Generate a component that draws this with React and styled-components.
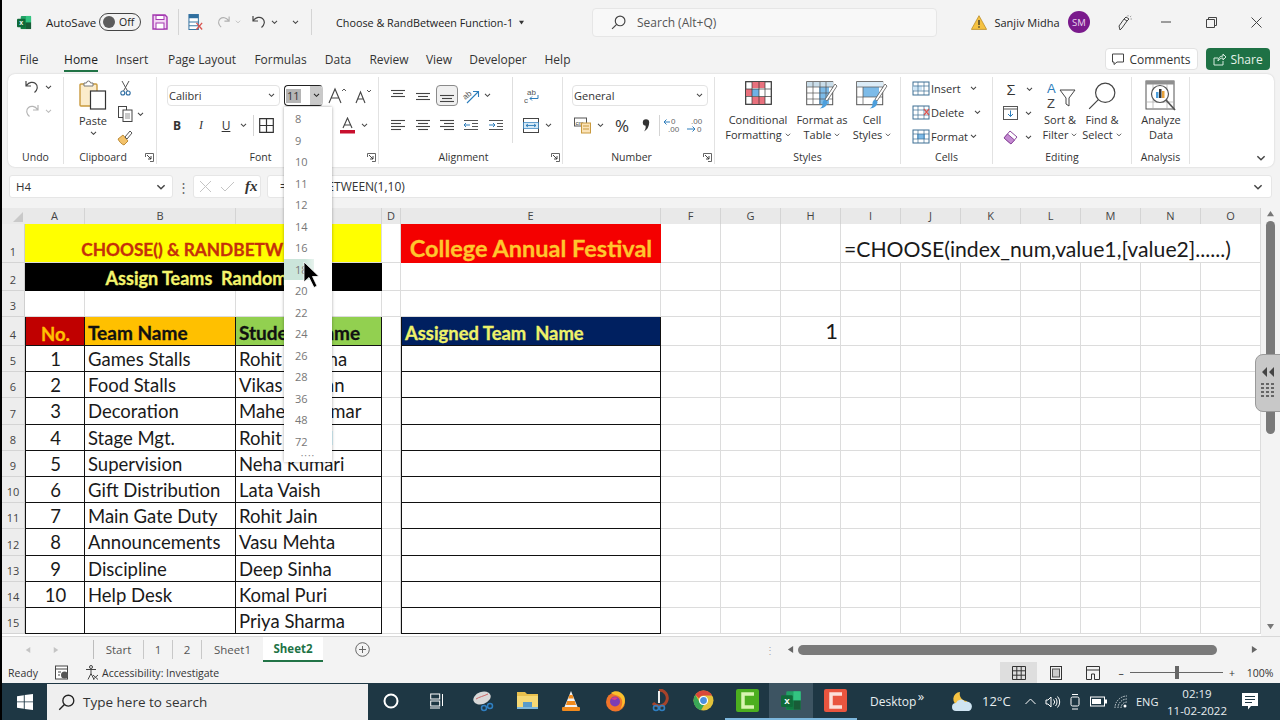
import React from 'react';
import styled, { createGlobalStyle } from 'styled-components';

const GlobalStyle = createGlobalStyle`
  html, body { margin: 0; padding: 0; background: #f3f3f3; }
  body { font-family: "Open Sans", "Noto Sans", sans-serif; color: #333; white-space: nowrap; }
  svg { display: block; }
`;

const Page = styled.div`
  position: relative;
  width: 1278px;
  height: 720px;
  border-left: 2px solid #000;
  overflow: hidden;
  display: flex;
  flex-direction: column;
  background: #f3f3f3;
  font-size: 11.5px;
`;

const Tool = styled.span`
  flex: none;
  width: ${p => p.$w || 16}px;
  margin-left: ${p => p.$ml || 0}px;
  display: inline-flex;
  align-items: center;
  justify-content: center;
  color: ${p => p.$color || 'inherit'};
  font-weight: ${p => p.$bold ? 700 : 400};
  font-size: ${p => p.$size ? p.$size + 'px' : 'inherit'};
`;

const VSep = styled.span`
  flex: none;
  width: 1px;
  height: ${p => p.$h || 22}px;
  margin-left: ${p => p.$ml || 0}px;
  background: #d4d4d4;
`;

/* title bar */
const TitleBar = styled.div`
  height: 44px;
  flex: none;
  display: flex;
  align-items: center;
  padding-left: 15px;
  font-size: 11.5px;
  color: #222;
`;

const Toggle = styled.span`
  width: 42px;
  height: 18px;
  box-sizing: border-box;
  border: 1px solid #444;
  border-radius: 10px;
  display: flex;
  align-items: center;
  gap: 4px;
  padding-left: 3px;
  font-size: 10.5px;
  &::before {
    content: '';
    width: 12px;
    height: 12px;
    border-radius: 50%;
    background: #5c5c5c;
  }
`;

const DocTitle = styled.span`
  width: 256px;
  margin-left: 24px;
  flex: none;
  display: flex;
  align-items: center;
  gap: 6px;
  font-size: 10.8px;
`;

const SearchBox = styled.div`
  width: 345px;
  height: 29px;
  flex: none;
  background: #f8f8f8;
  border: 1px solid #e6e6e6;
  box-sizing: border-box;
  border-radius: 4px;
  display: flex;
  align-items: center;
  padding-left: 18px;
  gap: 11px;
  color: #555;
  font-size: 12px;
`;

const Avatar = styled.span`
  width: 22px;
  height: 22px;
  border-radius: 50%;
  background: #7a1a8c;
  color: #e8d4ec;
  font-size: 9.5px;
  display: flex;
  align-items: center;
  justify-content: center;
  margin-left: 9px;
`;

/* tabs */
const TabRow = styled.div`
  height: 30px;
  flex: none;
  display: flex;
  align-items: flex-start;
  padding-left: 18px;
  box-sizing: border-box;
`;

const MenuTab = styled.span`
  flex: none;
  width: ${p => p.$w}px;
  margin-right: ${p => p.$mr}px;
  height: 24px;
  margin-top: 4px;
  display: flex;
  justify-content: center;
  align-items: center;
  font-size: 12px;
  color: ${p => p.$active ? '#1c1c1c' : '#333'};
  border-bottom: ${p => p.$active ? '2px solid #217346' : '2px solid transparent'};
  box-sizing: border-box;
`;

const CommentsBtn = styled.span`
  margin-left: auto;
  margin-top: 4px;
  width: 93px;
  height: 22px;
  background: #fff;
  border: 1px solid #e2e2e2;
  border-radius: 4px;
  box-sizing: border-box;
  display: flex;
  align-items: center;
  justify-content: center;
  gap: 5px;
  font-size: 12px;
`;

const ShareBtn = styled.span`
  margin: 4px 10px 0 8px;
  width: 64px;
  height: 22px;
  background: #1e7145;
  border-radius: 4px;
  color: #e6f2ea;
  display: flex;
  align-items: center;
  justify-content: center;
  gap: 4px;
  font-size: 12px;
`;

/* ribbon */
const Ribbon = styled.div`
  height: 93px;
  flex: none;
  margin: 0 6px;
  background: #fff;
  border-radius: 7px;
  box-shadow: 0 0 2px rgba(0, 0, 0, 0.18);
  display: flex;
  box-sizing: border-box;
  padding-top: 3px;
`;

const Group = styled.div`
  flex: none;
  width: ${p => p.$w}px;
  height: 87px;
  display: flex;
  flex-direction: column;
  border-right: 1px solid #e2e2e2;
  box-sizing: border-box;
`;

const GroupBody = styled.div`
  flex: 1;
  display: flex;
  padding-left: ${p => p.$pl || 0}px;
  min-height: 0;
`;

const GroupLabel = styled.div`
  position: relative;
  height: 14px;
  line-height: 14px;
  text-align: center;
  font-size: 10.5px;
  color: #333;
  padding-right: ${p => p.$launcher ? 14 : 0}px;
`;

const LauncherBox = styled.span`
  position: absolute;
  right: 2px;
  top: 3px;
`;

const Stack = styled.div`
  display: flex;
  flex-direction: column;
  gap: ${p => p.$gap || 0}px;
  padding-top: ${p => p.$pt || 0}px;
  width: ${p => p.$w ? p.$w + 'px' : 'auto'};
  flex: none;
`;

const ToolRow = styled.div`
  display: flex;
  align-items: center;
  height: ${p => p.$h || 21}px;
  width: ${p => p.$w ? p.$w + 'px' : 'auto'};
`;

const Combo = styled.div`
  flex: none;
  width: ${p => p.$w}px;
  height: 21px;
  box-sizing: border-box;
  border: 1px solid #e3e3e3;
  border-radius: 4px;
  background: #fff;
  display: flex;
  align-items: center;
  justify-content: space-between;
  padding: 0 4px 0 1px;
  font-size: 11px;
  color: #333;
`;

const SizeCombo = styled.div`
  flex: none;
  width: 39px;
  height: 21px;
  margin-left: 4px;
  box-sizing: border-box;
  border: 1.5px solid #222;
  border-right-color: #c8c8c8;
  border-top-color: #222;
  border-radius: 4px;
  display: flex;
  align-items: center;
  overflow: hidden;
  font-size: 11px;
`;

const SizeValue = styled.span`
  margin-left: 1px;
  background: #b5b5b5;
  padding: 0 1px;
  line-height: 14px;
`;

const SizeCaret = styled.span`
  margin-left: auto;
  width: 12px;
  align-self: stretch;
  background: #c9c9c9;
  display: flex;
  align-items: center;
  justify-content: center;
`;

const BoxedTool = styled(Tool)`
  height: 21px;
  border: 1px solid #8a8a8a;
  border-radius: 4px;
  background: #f0f0f0;
  box-sizing: border-box;
`;

const AlignCol = styled(Stack)`
  width: 126px;
  height: 58px;
  border-right: 1px solid #dedede;
  box-sizing: content-box;
`;

const BigButton = styled.div`
  flex: none;
  width: ${p => p.$w}px;
  display: flex;
  flex-direction: column;
  align-items: center;
  padding-top: ${p => p.$pt ?? 4}px;
  font-size: 11px;
  line-height: 15px;
  color: #333;
`;

const BigIcon = styled.div`
  height: 31px;
  display: flex;
  align-items: flex-start;
  justify-content: center;
`;

const Line = styled.span`
  display: flex;
  align-items: center;
  gap: 3px;
  white-space: nowrap;
`;

const CellRow = styled.div`
  width: ${p => p.$w}px;
  height: 16px;
  display: flex;
  align-items: center;
  font-size: 11px;
  gap: 1px;
  & > :last-child { margin-left: auto; }
`;

const RibbonEnd = styled.div`
  flex: 1;
  display: flex;
  align-items: flex-end;
  justify-content: flex-end;
  padding: 0 8px 6px 0;
`;

/* formula bar */
const FormulaBar = styled.div`
  height: 23px;
  flex: none;
  margin-top: 8px;
  display: flex;
  align-items: stretch;
  padding-left: 7px;
`;

const NameBox = styled.div`
  width: 164px;
  flex: none;
  background: #fff;
  border: 1px solid #e6e6e6;
  border-radius: 3px;
  box-sizing: border-box;
  display: flex;
  align-items: center;
  justify-content: space-between;
  padding: 0 6px;
  font-size: 11.5px;
`;

const FxBox = styled.div`
  width: 68px;
  flex: none;
  margin-left: 7px;
  background: #fff;
  border: 1px solid #e6e6e6;
  border-radius: 3px;
  box-sizing: border-box;
  display: flex;
  align-items: center;
  padding-left: 5px;
`;

const FxText = styled.span`
  font-family: "Liberation Serif", serif;
  font-style: italic;
  font-weight: 700;
  font-size: 15px;
  margin-left: 10px;
`;

const FormulaInput = styled.div`
  width: 1005px;
  flex: none;
  margin-left: 6px;
  background: #fff;
  border: 1px solid #e6e6e6;
  border-radius: 3px;
  box-sizing: border-box;
  display: flex;
  align-items: center;
  justify-content: space-between;
  padding: 0 8px 0 12px;
  font-size: 12px;
`;

/* sheet */
const SheetArea = styled.div`
  height: 428px;
  flex: none;
  margin-top: 10px;
  display: flex;
`;

const GridClip = styled.div`
  width: 1259px;
  flex: none;
  overflow: hidden;
  background: #fff;
`;

const SheetGrid = styled.div`
  display: grid;
  grid-template-columns: 23px 60px 151px 146px 19px 260px repeat(10, 60px);
  grid-template-rows: 16px 39px 28px 26px 29px repeat(11, 26.2px);
  font-family: "Lato", "Liberation Sans", sans-serif;
`;

const Corner = styled.div`
  background: #e9e9e9;
  display: flex;
  align-items: flex-end;
  justify-content: flex-end;
  padding: 0 2px 2px 0;
`;

const ColHead = styled.div`
  background: #e9e9e9;
  border-right: 1px solid #d4d4d4;
  font-family: "Open Sans", sans-serif;
  font-size: 11px;
  color: #444;
  text-align: center;
  line-height: 15px;
`;

const RowHead = styled.div`
  background: #ededed;
  border-bottom: 1px solid #d4d4d4;
  border-right: 1px solid #cfcfcf;
  font-family: "Open Sans", sans-serif;
  font-size: 11px;
  color: #444;
  display: flex;
  align-items: flex-end;
  justify-content: center;
  padding-bottom: 3px;
  box-sizing: border-box;
`;

const Cell = styled.div`
  grid-column: span ${p => p.$span || 1};
  box-sizing: border-box;
  background: ${p => p.$bg || '#fff'};
  color: ${p => p.$color || '#1a1a1a'};
  font-size: ${p => p.$size || 18.5}px;
  font-weight: ${p => p.$bold ? 700 : 400};
  -webkit-text-stroke: ${p => p.$bold ? '0.3px' : '0'};
  border-right: 1px solid ${p => p.$line || '#dcdcdc'};
  border-bottom: 1px solid ${p => p.$line || '#dcdcdc'};
  border-left: ${p => p.$left ? '1px solid #111' : 'none'};
  display: flex;
  align-items: flex-end;
  justify-content: ${p => p.$align || 'flex-start'};
  padding: 0 ${p => p.$pr ?? 2}px ${p => p.$pb ?? 1}px 3px;
  white-space: pre;
  line-height: 1.2;
  overflow: hidden;
`;

const VScroll = styled.div`
  width: 19px;
  flex: none;
  display: flex;
  flex-direction: column;
  align-items: center;
  padding: 2px 0 0 0;
  box-sizing: border-box;
`;

const VThumb = styled.div`
  width: 9px;
  height: 213px;
  margin-top: 4px;
  border-radius: 5px;
  background: #7a7a7a;
`;

const VSpacer = styled.div`
  flex: ${p => p.$h ? 'none' : 1};
  height: ${p => p.$h ? p.$h + 'px' : 'auto'};
`;

const SheetHandle = styled.div`
  position: absolute;
  left: 1253px;
  top: 354px;
  width: 30px;
  height: 58px;
  box-sizing: border-box;
  background: #c8c8c8;
  border: 1px solid #9a9a9a;
  border-radius: 8px 0 0 8px;
  display: flex;
  flex-direction: column;
  align-items: flex-start;
  gap: 6px;
  padding: 12px 0 0 5px;
`;

const DotGrid = styled.div`
  display: grid;
  grid-template-columns: repeat(3, 3px);
  gap: 2px 2px;
  & > i { width: 3px; height: 2px; background: #666; display: block; }
`;

/* font size menu */
const SizeMenu = styled.div`
  position: absolute;
  left: 282px;
  top: 107px;
  width: 48px;
  height: 355px;
  background: #fff;
  box-shadow: 0 0 3px rgba(0, 0, 0, 0.35);
  padding-top: 1px;
  box-sizing: border-box;
  overflow: hidden;
`;

const SizeItem = styled.div`
  height: 21.5px;
  line-height: 21.5px;
  padding-left: 11px;
  width: 19px;
  font-size: 11px;
  color: #777;
  background: ${p => p.$hover ? 'linear-gradient(90deg, #cbe5da 70%, #e8f3ee)' : 'transparent'};
`;

const MoreDots = styled.div`
  text-align: center;
  line-height: 8px;
  font-size: 10px;
  letter-spacing: 1px;
  color: #888;
  margin-top: -1px;
`;

const CursorWrap = styled.div`
  position: absolute;
  left: 299px;
  top: 260px;
`;

/* sheet tabs */
const TabStrip = styled.div`
  height: 26px;
  flex: none;
  display: flex;
  align-items: center;
  font-size: 11.5px;
  color: #555;
  background: #f3f3f3;
  border-top: 1px solid #d8d8d8;
  box-sizing: border-box;
`;

const NavArrows = styled.div`
  width: 92px;
  flex: none;
  display: flex;
  padding-left: 23px;
  gap: 22px;
  box-sizing: border-box;
  border-right: 1px solid #bdbdbd;
  height: 19px;
  align-items: center;
`;

const SheetTab = styled.span`
  flex: none;
  width: ${p => p.$w}px;
  box-sizing: border-box;
  height: ${p => p.$active ? 25 : 19}px;
  align-self: ${p => p.$active ? 'flex-start' : 'center'};
  display: flex;
  align-items: center;
  justify-content: center;
  border-right: ${p => p.$sep ? '1px solid #c8c8c8' : 'none'};
  background: ${p => p.$active ? '#fff' : 'transparent'};
  color: ${p => p.$active ? '#217346' : '#555'};
  font-weight: ${p => p.$active ? 700 : 400};
  border-bottom: ${p => p.$active ? '2px solid #217346' : 'none'};
`;

const HThumb = styled.div`
  width: 419px;
  height: 10px;
  flex: none;
  background: #7a7a7a;
  border-radius: 5px;
  margin-left: 4px;
`;

/* status bar */
const StatusBar = styled.div`
  height: 21px;
  flex: none;
  display: flex;
  align-items: center;
  font-size: 10.5px;
  color: #333;
  padding-left: 6px;
`;

const ViewBtn = styled.span`
  flex: none;
  width: ${p => p.$w}px;
  align-self: stretch;
  margin-left: ${p => p.$auto ? 'auto' : '0'};
  display: flex;
  align-items: center;
  justify-content: center;
  background: ${p => p.$active ? '#dedede' : 'transparent'};
`;

const ZoomTrack = styled.span`
  position: relative;
  flex: none;
  width: 93px;
  height: 1px;
  background: #666;
  margin-left: 4px;
`;

const ZoomThumb = styled.span`
  position: absolute;
  left: 45px;
  top: -6px;
  width: 4px;
  height: 13px;
  background: #666;
`;

/* task bar */
const TaskBar = styled.div`
  height: 37px;
  flex: none;
  display: flex;
  align-items: center;
  background: #1e3744;
  color: #e8eef0;
`;

const TaskSearch = styled.div`
  width: 321px;
  height: 36px;
  align-self: flex-end;
  flex: none;
  background: #efefef;
  color: #333;
  display: flex;
  align-items: center;
  padding-left: 11px;
  gap: 8px;
  font-size: 13.5px;
  box-sizing: border-box;
`;

const TaskIcon = styled.span`
  flex: none;
  width: ${p => p.$w || 44}px;
  height: 37px;
  display: flex;
  align-items: center;
  justify-content: center;
  box-sizing: border-box;
  background: ${p => p.$active ? '#3d5462' : 'transparent'};
  border-bottom: ${p => p.$running ? '2px solid #7db7dd' : '2px solid transparent'};
`;

const TrayText = styled.span`
  flex: none;
  width: ${p => p.$w}px;
  margin-left: ${p => p.$ml || 0}px;
  font-size: ${p => p.$size || 12}px;
  text-align: ${p => p.$center ? 'center' : 'left'};
  line-height: 17px;
`;

/* icons */
const Chev = ({ c = '#444', s = 8 }) => (
  <svg width={s} height={s * 0.6} viewBox="0 0 8 5"><path d="M1 1l3 3 3-3" fill="none" stroke={c} strokeWidth="1.2" /></svg>
);

const Undo = ({ c = '#444', flip }) => (
  <svg width="16" height="16" viewBox="0 0 16 16" style={flip ? { transform: 'scaleX(-1)' } : undefined}>
    <path d="M2 2v5h5M2.5 6.5C5 3 9 2.5 11.5 4.5c3 2.5 2 6.5-1 9" fill="none" stroke={c} strokeWidth="1.2" />
  </svg>
);

const ExcelLogo = ({ s = 15 }) => (
  <svg width={s} height={s} viewBox="0 0 16 16">
    <rect x="4" y="1" width="11" height="14" rx="1" fill="#21a366" />
    <rect x="9.5" y="1" width="5.5" height="7" fill="#33c481" />
    <rect x="4" y="8" width="5.5" height="7" fill="#107c41" />
    <rect x="9.5" y="8" width="5.5" height="7" fill="#185c37" />
    <rect x="0" y="4" width="9" height="9" rx="1" fill="#0f6b3a" />
    <text x="4.5" y="11" fontSize="7.5" fontWeight="700" textAnchor="middle" fill="#fff" fontFamily="Liberation Sans">x</text>
  </svg>
);

const SaveIcon = () => (
  <svg width="16" height="16" viewBox="0 0 16 16">
    <path d="M1 1h12l2 2v12H1z" fill="#f3d6f5" stroke="#a438b0" strokeWidth="1.4" />
    <rect x="4" y="1.5" width="8" height="4" fill="#fff" stroke="#a438b0" />
    <rect x="4" y="9" width="8" height="6" fill="#fff" stroke="#a438b0" />
  </svg>
);

const SheetX = () => (
  <svg width="17" height="18" viewBox="0 0 17 18">
    <rect x="1" y="1" width="10" height="16" fill="#fff" stroke="#2f6f9f" />
    <rect x="1" y="1" width="10" height="4" fill="#2f6f9f" />
    <path d="M1 9h10M1 13h10" stroke="#2f6f9f" />
    <path d="M9 10l6 7M15 10l-6 7" stroke="#d9534f" strokeWidth="1.4" />
  </svg>
);

const Warn = () => (
  <svg width="16" height="15" viewBox="0 0 16 15">
    <path d="M8 .7L15.6 14.4H.4z" fill="#f5c242" stroke="#b58215" strokeWidth=".7" />
    <path d="M8 5v5M8 11.2v1.5" stroke="#222" strokeWidth="1.2" />
  </svg>
);

const Pen = () => (
  <svg width="15" height="17" viewBox="0 0 15 17">
    <path d="M3 16l-1-4 5-7 3 2-5 7zM7 5l2-2 3 2-2 2" fill="none" stroke="#444" strokeWidth="1" />
    <path d="M11 1v1.5M13 3l1.2-1M13.5 5H15" stroke="#888" strokeWidth=".8" />
  </svg>
);

const Lens = ({ s = 14, c = '#444', w = 1.1 }) => (
  <svg width={s} height={s} viewBox="0 0 14 14">
    <circle cx="8.5" cy="5.5" r="4.5" fill="none" stroke={c} strokeWidth={w} />
    <path d="M5.3 8.7L1 13" stroke={c} strokeWidth={w} />
  </svg>
);

const PasteIcon = () => (
  <svg width="28" height="30" viewBox="0 0 28 30">
    <rect x="1" y="4" width="17" height="22" rx="1" fill="#fbeccb" stroke="#c99a3e" strokeWidth="1.4" />
    <path d="M5 6V3h2.5a2 2 0 0 1 4 0H14v3z" fill="#fff" stroke="#777" />
    <rect x="11.5" y="11" width="15" height="18" fill="#fff" stroke="#333" strokeWidth="1.2" />
  </svg>
);

const CutIcon = () => (
  <svg width="11" height="15" viewBox="0 0 11 15">
    <path d="M2 0l5.5 10M9 0L3.5 10" stroke="#555" fill="none" strokeWidth="1" />
    <circle cx="2.8" cy="12" r="2" fill="none" stroke="#2d6da3" strokeWidth="1.1" />
    <circle cx="8.2" cy="12" r="2" fill="none" stroke="#2d6da3" strokeWidth="1.1" />
  </svg>
);

const CopyIcon = () => (
  <svg width="15" height="16" viewBox="0 0 15 16">
    <rect x=".5" y=".5" width="8" height="11" fill="#fff" stroke="#444" />
    <rect x="5" y="4" width="9" height="11.5" fill="#fff" stroke="#444" />
    <path d="M7 8h5M7 10h5M7 12h5" stroke="#777" strokeWidth=".8" />
  </svg>
);

const BrushIcon = () => (
  <svg width="16" height="17" viewBox="0 0 16 17">
    <path d="M1 10l5-4 5 6-4 4c-2-.5-5-3.5-6-6z" fill="#f3c26a" stroke="#b07a20" strokeWidth=".8" />
    <path d="M8 8l5-6 2 2-5 6z" fill="#fff" stroke="#444" strokeWidth=".9" />
  </svg>
);

const BoldA = ({ s = 16, up }) => (
  <svg width="20" height="17" viewBox="0 0 20 17">
    <path d={s > 14 ? 'M1 16L7 2l6 14M3.5 11h7' : 'M3 16l4.5-11L12 16M5 12h5'} fill="none" stroke="#444" strokeWidth="1.1" />
    <path d={up ? 'M14 4l2-2 2 2' : 'M14 3l2 2 2-2'} fill="none" stroke="#444" strokeWidth=".9" />
  </svg>
);

const BorderGrid = () => (
  <svg width="15" height="15" viewBox="0 0 15 15"><path d="M.7.7h13.600v13.600H.7zM7.5.7v13.600M.7 7.5h13.600" fill="none" stroke="#333" strokeWidth="1.2" /></svg>
);

const FontColor = () => (
  <svg width="15" height="17" viewBox="0 0 15 17">
    <path d="M3 11L7.5 1 12 11M4.5 8h6" fill="none" stroke="#444" strokeWidth="1.1" />
    <rect x="0" y="13" width="15" height="3.5" fill="#c8102e" />
  </svg>
);

const TextLines = ({ rows }) => (
  <svg width="16" height="14" viewBox="0 0 16 14">
    {rows.map(([x1, x2, y], i) => <path key={i} d={`M${x1} ${y}H${x2}`} stroke="#444" strokeWidth="1.1" />)}
  </svg>
);

const alignTop = [[1, 15, 1.5], [3, 13, 4.5], [1, 15, 7.5]];
const alignMid = [[1, 15, 4.5], [3, 13, 7.5], [1, 15, 10.5]];
const alignBot = [[1, 15, 6.5], [3, 13, 9.5], [1, 15, 12.5]];
const alignL = [[1, 15, 1.5], [1, 11, 4.5], [1, 15, 7.5], [1, 11, 10.5]];
const alignC = [[1, 15, 1.5], [3, 13, 4.5], [1, 15, 7.5], [3, 13, 10.5]];
const alignR = [[1, 15, 1.5], [5, 15, 4.5], [1, 15, 7.5], [5, 15, 10.5]];

const Indent = ({ flip }) => (
  <svg width="16" height="14" viewBox="0 0 16 14">
    <path d="M1 1.5h14M9 4.5h6M9 7.5h6M1 10.5h14" stroke="#555" strokeWidth="1" />
    <path d={flip ? 'M1 6h6M5 4l2 2-2 2' : 'M7 6H1M3 4L1 6l2 2'} fill="none" stroke="#2d7dbb" strokeWidth="1" />
  </svg>
);

const Orient = () => (
  <svg width="18" height="16" viewBox="0 0 18 16">
    <text x="1" y="10" fontSize="8" fill="#555" fontFamily="Liberation Sans" transform="rotate(-40 5 8)">ab</text>
    <path d="M5 15L16 4M11 3.5h5.500V9" fill="none" stroke="#2d7dbb" strokeWidth="1.1" />
  </svg>
);

const Wrap = () => (
  <svg width="15" height="17" viewBox="0 0 15 17">
    <text x="3" y="8" fontSize="8" fill="#555" fontFamily="Liberation Sans">ab</text>
    <text x="0" y="16" fontSize="8" fill="#555" fontFamily="Liberation Sans">c</text>
    <path d="M14 8v3.5H6M8 9.5l-2 2 2 2" fill="none" stroke="#2d7dbb" strokeWidth="1" />
  </svg>
);

const Merge = () => (
  <svg width="16" height="15" viewBox="0 0 16 15">
    <rect x=".5" y=".5" width="15" height="14" fill="#fff" stroke="#444" />
    <rect x=".5" y="4.5" width="15" height="6" fill="#d5e9f6" stroke="#2d7dbb" strokeWidth=".7" />
    <path d="M3 7.5h10M5 6L3 7.5 5 9M11 6l2 1.5L11 9" fill="none" stroke="#2d7dbb" strokeWidth=".9" />
  </svg>
);

const Accounting = () => (
  <svg width="18" height="17" viewBox="0 0 18 17">
    <rect x=".5" y="1" width="12" height="8" fill="#fff" stroke="#555" />
    <text x="1.5" y="7.5" fontSize="6" fill="#333" fontFamily="Liberation Sans">cm</text>
    <rect x="7.5" y="6" width="9" height="10" fill="#fbe3b8" stroke="#c99a3e" />
    <path d="M9 9h6M9 12h6" stroke="#c99a3e" />
  </svg>
);

const Comma = () => (
  <svg width="8" height="13" viewBox="0 0 8 13">
    <circle cx="4" cy="3.5" r="3.2" fill="#333" />
    <path d="M7 4c0 4-2 7-5 8.500 1.500-2 2-4 1.500-6z" fill="#333" />
  </svg>
);

const DecimalIcon = ({ more }) => (
  <svg width="18" height="17" viewBox="0 0 18 17">
    <text x={more ? 8 : 5} y="7" fontSize="8" fill="#666" fontFamily="Liberation Sans">{more ? '0' : '.00'}</text>
    <text x="5" y="15" fontSize="8" fill="#666" fontFamily="Liberation Sans">{more ? '.00' : ''}</text>
    {!more && <text x="11" y="15" fontSize="8" fill="#666" fontFamily="Liberation Sans">0</text>}
    <path d={more ? 'M7 5H1M3.5 2.5L1 5l2.5 2.5' : 'M1 12h8M6.5 9.5L9 12l-2.5 2.5'} fill="none" stroke="#2d7dbb" strokeWidth="1" />
  </svg>
);

const CondFormat = () => (
  <svg width="27" height="24" viewBox="0 0 27 24">
    <rect x=".7" y=".7" width="25.6" height="22.6" fill="#fff" stroke="#333" strokeWidth="1.2" />
    <rect x="7" y="1" width="13" height="6" fill="#e8717d" />
    <rect x="1" y="8" width="6" height="7" fill="#e8717d" />
    <rect x="7" y="8" width="7" height="7" fill="#6fb2e4" />
    <rect x="7" y="16" width="13" height="7" fill="#e8717d" />
    <path d="M7 1v22M14 1v22M20 1v22M1 8h25M1 15.5h25" stroke="#333" strokeWidth=".7" fill="none" />
  </svg>
);

const TableBrush = ({ wide }) => (
  <svg width="32" height="31" viewBox="0 0 32 31">
    <rect x=".7" y=".7" width="26" height="23" fill="#fff" stroke="#555" />
    <rect x="1" y="1" width="26" height="5" fill={wide ? '#dcecf7' : '#c9ddea'} />
    {wide
      ? <rect x="7" y="6" width="16" height="10" fill="#7dbbe8" />
      : <rect x="13" y="6" width="10" height="17" fill="#7dbbe8" />}
    <path d={wide ? 'M1 6h26M7 6v17M1 16h26' : 'M1 6h26M7 1v22M14 1v22M20 1v22M1 12h26M1 18h26'} stroke="#555" strokeWidth=".7" fill="none" />
    <path d="M31 5L21 20l-2-1.5L29 3z" fill="#fff" stroke="#555" strokeWidth=".8" />
    <path d="M19 18.5l2.5 2c0 4-3 7-8 7 2-1 3-2 3-5 0-2 1-3.5 2.5-4z" fill="#4d9fdc" />
  </svg>
);

const CellIcon = ({ kind }) => (
  <svg width="18" height="16" viewBox="0 0 18 16">
    <rect x="1" y="2" width="16" height="13" fill="#fff" stroke="#3c6f93" />
    {kind === 'format' && <rect x="5" y="6" width="8" height="5" fill="#7dbbe8" />}
    {kind === 'insert' && <rect x="1" y="5.5" width="9" height="5" fill="#cfe6f6" />}
    <path d="M1 6h16M1 11h16M6 2v13M12 2v13" stroke="#3c6f93" strokeWidth=".7" />
    {kind === 'delete' && <path d="M12 5l5 6M17 5l-5 6" stroke="#d9534f" strokeWidth="1.2" />}
  </svg>
);

const FillDown = () => (
  <svg width="15" height="14" viewBox="0 0 15 14">
    <rect x=".5" y=".5" width="14" height="13" fill="#fff" stroke="#555" />
    <path d="M1 3h13" stroke="#555" />
    <path d="M7.5 4.5v6M5 8l2.5 2.5L10 8" fill="none" stroke="#2d7dbb" />
  </svg>
);

const Eraser = () => (
  <svg width="15" height="15" viewBox="0 0 15 15">
    <path d="M1 8l6-7 7 6-6 7z" fill="#fff" stroke="#8b4a9c" />
    <path d="M1 8l3.5-4 7 6L8 14z" fill="#c58ad2" stroke="#8b4a9c" />
  </svg>
);

const SortFilter = () => (
  <svg width="31" height="30" viewBox="0 0 31 30">
    <text x="2" y="12" fontSize="13" fill="#2d7dbb" fontFamily="Liberation Sans">A</text>
    <text x="2" y="27" fontSize="13" fill="#444" fontFamily="Liberation Sans">Z</text>
    <path d="M15 9h15l-6 8v8l-3-2v-6z" fill="#fff" stroke="#444" strokeWidth="1" />
  </svg>
);

const AnalyzeIcon = () => (
  <svg width="32" height="32" viewBox="0 0 32 32">
    <rect x="1" y="1" width="28" height="28" fill="#fff" stroke="#555" />
    <rect x="1" y="1" width="28" height="3.5" fill="#8f8f8f" />
    <path d="M1 22h28M8 4v25M22 4v25" stroke="#aaa" strokeWidth=".7" />
    <circle cx="15" cy="14" r="8.5" fill="#fff" stroke="#555" strokeWidth="1.2" />
    <rect x="11" y="12" width="2.5" height="6" fill="#4d9fdc" />
    <rect x="14" y="9" width="2.5" height="9" fill="#333" />
    <rect x="17" y="11" width="2.5" height="7" fill="#e8a33d" />
    <path d="M21 20l9 10" stroke="#555" strokeWidth="1.8" />
  </svg>
);

const Launcher = () => (
  <svg width="9" height="9" viewBox="0 0 9 9">
    <path d="M.5 4V.5H8.5V8.5H5" fill="none" stroke="#555" strokeWidth=".9" />
    <path d="M2 2l4 4M6 3v3H3" fill="none" stroke="#2f2f2f" strokeWidth=".9" />
  </svg>
);

const Tri = ({ d = 'right', c = '#777', s = 7 }) => {
  const paths = { right: 'M1 0l6 4-6 4z', left: 'M7 0L1 4l6 4z', up: 'M0 7l4-6 4 6z', down: 'M0 1l4 6 4-6z' };
  return <svg width={s} height={s} viewBox="0 0 8 8"><path d={paths[d]} fill={c} /></svg>;
};

const Cursor = () => (
  <svg width="20" height="30" viewBox="0 0 20 30">
    <path d="M3 2v20l5-4.5 5 10 3-1.5-4.5-9.5H18z" fill="#000" stroke="#fff" strokeWidth=".8" />
  </svg>
);

const WinLogo = () => (
  <svg width="16" height="16" viewBox="0 0 16 16"><path d="M0 2.2L6.800 1.200V7.5H0zM7.700 1L16 0V7.5H7.700zM0 8.300h6.800v6.500L0 13.800zM7.700 8.300H16V16l-8.300-1.100z" fill="#fff" /></svg>
);

const TaskView = () => (
  <svg width="15" height="16" viewBox="0 0 15 16">
    <rect x=".7" y="1" width="9" height="5" fill="none" stroke="#fff" />
    <rect x=".7" y="8" width="9" height="5" fill="none" stroke="#fff" />
    <path d="M12.5 1v12M0 15h10" stroke="#fff" />
  </svg>
);

const SnipBird = () => (
  <svg width="22" height="22" viewBox="0 0 22 22">
    <ellipse cx="10" cy="8" rx="9" ry="6" fill="#d8d8d8" transform="rotate(-20 10 8)" />
    <path d="M4 9c3-2 8-3 12-5" stroke="#c66" fill="none" />
    <circle cx="12" cy="18" r="2.5" fill="none" stroke="#2f7fc1" strokeWidth="1.5" />
    <circle cx="18" cy="16" r="2.5" fill="none" stroke="#2f7fc1" strokeWidth="1.5" />
  </svg>
);

const Folder = () => (
  <svg width="21" height="19" viewBox="0 0 21 19">
    <path d="M0 1h8l2 2h11v15H0z" fill="#e9c04e" />
    <rect x="0" y="5" width="21" height="13" fill="#f6d874" />
    <rect x="6" y="11" width="9" height="7" fill="#5a9bc9" />
    <rect x="0" y="16" width="21" height="2" fill="#7db7dd" />
  </svg>
);

const Vlc = () => (
  <svg width="20" height="22" viewBox="0 0 20 22">
    <path d="M10 1l7 17H3z" fill="#f2f2f2" />
    <path d="M8.4 5h3.200l1.200 3.5H7.200zM6.200 11h7.600l1.200 4H5z" fill="#f08a1d" />
    <rect x="1" y="17" width="18" height="4" rx="1" fill="#f08a1d" />
  </svg>
);

const Firefox = () => (
  <svg width="21" height="22" viewBox="0 0 21 22">
    <circle cx="10.5" cy="12" r="9.5" fill="#f0742a" />
    <path d="M6 3c4-3 10-2 13 3 2 4 1 10-4 13 3-4 3-9 0-12-3-2-6-2-9-4z" fill="#fbc02d" />
    <circle cx="10" cy="11.5" r="5" fill="#7b3db4" />
    <path d="M6 9c2-2 5-2 7-1l-3 2z" fill="#e33d80" />
  </svg>
);

const ClockSnip = () => (
  <svg width="20" height="24" viewBox="0 0 20 24">
    <path d="M10 1a8 8 0 1 1-6 13" fill="none" stroke="#a8432a" strokeWidth="3" />
    <path d="M10 2v12" stroke="#eee" strokeWidth="2" />
    <circle cx="7" cy="19" r="2.5" fill="none" stroke="#2f7fc1" strokeWidth="1.6" />
    <circle cx="13" cy="19" r="2.5" fill="none" stroke="#2f7fc1" strokeWidth="1.6" />
  </svg>
);

const Chrome = () => (
  <svg width="21" height="21" viewBox="0 0 21 21">
    <circle cx="10.5" cy="10.5" r="10" fill="#e2c23a" />
    <path d="M10.5.5a10 10 0 0 1 8.700 5H10.500a5 5 0 0 0-4.500 3L2.300 4.800A10 10 0 0 1 10.500.5z" fill="#d9483b" />
    <path d="M.5 10.5a10 10 0 0 1 1.800-5.700L6.500 12a5 5 0 0 0 4.500 3l-3 5.300a10 10 0 0 1-7.500-9.800z" fill="#3aa757" />
    <circle cx="10.5" cy="10.5" r="4" fill="#4a8fe0" stroke="#fff" strokeWidth="1.2" />
  </svg>
);

const Camtasia = ({ bg, fg }) => (
  <svg width="23" height="23" viewBox="0 0 23 23">
    <rect width="23" height="23" rx="2" fill={bg} />
    <path d="M18 5H7v13h11" fill="none" stroke={fg} strokeWidth="3.5" />
  </svg>
);

const Weather = () => (
  <svg width="22" height="22" viewBox="0 0 22 22">
    <path d="M8 1a7 7 0 1 0 7 9A7 7 0 0 1 8 1z" fill="#f5c242" />
    <path d="M4 20a4 4 0 0 1 0-8 5 5 0 0 1 9-1 4.5 4.5 0 0 1 4 9z" fill="#cfe4f2" />
  </svg>
);

const Speaker = () => (
  <svg width="16" height="14" viewBox="0 0 16 14">
    <path d="M1 5h2l3-3v10L3 9H1z" fill="none" stroke="#fff" />
    <path d="M8.5 4.5a3.5 3.5 0 0 1 0 5M10.500 3a6 6 0 0 1 0 8M12.500 1.500a8 8 0 0 1 0 11" fill="none" stroke="#fff" />
  </svg>
);

const MeetIcon = () => (
  <svg width="10" height="18" viewBox="0 0 10 18">
    <rect x="1" y="4" width="8" height="9" rx="1.5" fill="none" stroke="#fff" />
    <path d="M2 1.5h6M2 16h6" stroke="#fff" />
  </svg>
);

const Battery = () => (
  <svg width="17" height="11" viewBox="0 0 17 11">
    <rect x=".5" y="1" width="14" height="9" fill="none" stroke="#fff" />
    <rect x="2" y="3" width="9" height="5" fill="#fff" />
    <rect x="15" y="3.5" width="2" height="4" fill="#fff" />
  </svg>
);

const Wifi = () => (
  <svg width="14" height="14" viewBox="0 0 14 14">
    <path d="M1 13A12 12 0 0 1 13 1M4 13a9 9 0 0 1 9-9M7 13a6 6 0 0 1 6-6" fill="none" stroke="#cfd8dc" strokeDasharray="1.5 1" />
    <circle cx="11" cy="11" r="1.5" fill="#fff" />
  </svg>
);

const Notify = () => (
  <svg width="16" height="17" viewBox="0 0 16 17">
    <path d="M0 0h16v13H9l-3 3.5V13H0z" fill="#fff" />
    <path d="M3 3.5h10M3 6.5h10M3 9.5h7" stroke="#1e3744" />
  </svg>
);

const Comment = ({ c = '#444' }) => (
  <svg width="12" height="12" viewBox="0 0 12 12"><path d="M.5 1h11v8H5l-3 2.5V9H.5z" fill="none" stroke={c} /></svg>
);

const ShareIco = () => (
  <svg width="13" height="13" viewBox="0 0 13 13"><path d="M1 5h4M1 5v7h9V8M5 8c0-3 2-5 5-5V1l3 3-3 3V5C8 5 6 6 5 8z" fill="none" stroke="#d5ebdf" /></svg>
);

const ViewIco = ({ kind }) => (
  <svg width="14" height="14" viewBox="0 0 14 14">
    {kind === 'normal' && <path d="M.5.5h13v13H.5zM.5 4.800h13M.5 9.200h13M4.800.5v13M9.200.5v13" fill="none" stroke="#333" />}
    {kind === 'layout' && <><rect x="1.5" y=".5" width="11" height="13" fill="none" stroke="#333" /><rect x="3.5" y="3" width="7" height="8" fill="#ccc" stroke="#555" /></>}
    {kind === 'break' && <path d="M.5.5h13v13H8.500V8H5.500v5.500H.5zM.5 4h13" fill="none" stroke="#333" />}
  </svg>
);

const Macro = () => (
  <svg width="15" height="15" viewBox="0 0 15 15">
    <rect x=".5" y="1" width="12" height="13" fill="#fff" stroke="#444" />
    <path d="M.5 4h12" stroke="#444" />
    <circle cx="9.5" cy="10" r="3.5" fill="#555" />
    <path d="M3 7h3M3 10h2" stroke="#444" />
  </svg>
);

const Access = () => (
  <svg width="14" height="15" viewBox="0 0 14 15">
    <circle cx="6" cy="2" r="1.5" fill="none" stroke="#444" />
    <path d="M1 4.5h10M6 4.5v4M6 8.500l-3 6M6 8.500l3 6" stroke="#444" fill="none" />
    <path d="M8 10l5 4.500M13 10l-5 4.500" stroke="#444" />
  </svg>
);

const TABS = [
  ['File', 18, 26], ['Home', 34, 19], ['Insert', 30, 22], ['Page Layout', 66, 21], ['Formulas', 49, 20],
  ['Data', 26, 19], ['Review', 38, 19], ['View', 24, 19], ['Developer', 56, 19], ['Help', 25, 0],
];

const SIZES = [8, 9, 10, 11, 12, 14, 16, 18, 20, 22, 24, 26, 28, 36, 48, 72];

const COLS = ['A', 'B', 'C', 'D', 'E', 'F', 'G', 'H', 'I', 'J', 'K', 'L', 'M', 'N', 'O'];

const TEAMS = [
  ['1', 'Games Stalls', 'Rohit Sharma'],
  ['2', 'Food Stalls', 'Vikas Mohan'],
  ['3', 'Decoration', 'Mahesh Kumar'],
  ['4', 'Stage Mgt.', 'Rohit Goyal'],
  ['5', 'Supervision', 'Neha Kumari'],
  ['6', 'Gift Distribution', 'Lata Vaish'],
  ['7', 'Main Gate Duty', 'Rohit Jain'],
  ['8', 'Announcements', 'Vasu Mehta'],
  ['9', 'Discipline', 'Deep Sinha'],
  ['10', 'Help Desk', 'Komal Puri'],
  ['', '', 'Priya Sharma'],
];

const BLACK = '#111';

// special cells of the sheet, everything else is an empty cell with grid lines
const sheetCells = () => {
  const c = {
    A1: { span: 3, text: 'CHOOSE() & RANDBETWEEN()', bg: '#ffff00', color: '#c5300a', bold: true, size: 17.3, align: 'center', pb: 1 },
    A2: { span: 3, text: 'Assign Teams  Randomly', bg: '#000', color: '#f4f46c', bold: true, size: 18, align: 'center', line: '#000', pb: 0 },
    E1: { text: 'College Annual Festival', bg: '#f40000', color: '#ffc62e', bold: true, size: 23.5, align: 'center', line: '#f40000', pb: 0 },
    I1: { span: 7, text: '=CHOOSE(index_num,value1,[value2]......)', size: 21.2, pb: 0 },
    A4: { text: 'No.', bg: '#c00000', color: '#ffc000', bold: true, align: 'center', line: BLACK, left: true, pb: 0 },
    B4: { text: 'Team Name', bg: '#ffc000', color: '#111', bold: true, size: 19, line: BLACK, pb: 0 },
    C4: { text: 'Student Name', bg: '#92d050', color: '#111', bold: true, size: 19, line: BLACK, pb: 0 },
    E4: { text: 'Assigned Team  Name', bg: '#002060', color: '#eef26a', bold: true, size: 18.4, line: BLACK, left: true, pb: 1 },
    H4: { text: '1', size: 22, align: 'flex-end', pr: 2, pb: 1 },
  };
  TEAMS.forEach(([no, team, student], i) => {
    const r = i + 5;
    c[`A${r}`] = { text: no, align: 'center', line: BLACK, left: true };
    c[`B${r}`] = { text: team, line: BLACK };
    c[`C${r}`] = { text: student, line: BLACK };
    c[`E${r}`] = { text: '', line: BLACK, left: true };
  });
  return c;
};

const skipped = new Set(['B1', 'C1', 'B2', 'C2', 'J1', 'K1', 'L1', 'M1', 'N1', 'O1']);

const Sheet = () => {
  const cells = sheetCells();
  const rows = [];
  for (let r = 1; r <= 15; r++) {
    rows.push(<RowHead key={`h${r}`}>{r}</RowHead>);
    COLS.forEach(col => {
      const id = col + r;
      if (skipped.has(id)) return;
      const d = cells[id] || {};
      rows.push(
        <Cell key={id} $span={d.span} $bg={d.bg} $color={d.color} $bold={d.bold} $size={d.size}
          $align={d.align} $line={d.line} $left={d.left} $pb={d.pb} $pr={d.pr}>{d.text}</Cell>
      );
    });
  }
  return (
    <SheetGrid>
      <Corner>
        <svg width="10" height="10" viewBox="0 0 10 10"><path d="M10 0v10H0z" fill="#c9c9c9" /></svg>
      </Corner>
      {COLS.map(c => <ColHead key={c}>{c}</ColHead>)}
      {rows}
    </SheetGrid>
  );
};

const App = () => (
  <Page>
    <GlobalStyle />

    <TitleBar>
      <ExcelLogo />
      <Tool $w={53} $ml={14} style={{ justifyContent: 'flex-start' }}>AutoSave</Tool>
      <Toggle>Off</Toggle>
      <Tool $w={16} $ml={11}><SaveIcon /></Tool>
      <VSep $h={26} $ml={10} />
      <Tool $w={16} $ml={9}><SheetX /></Tool>
      <Tool $w={15} $ml={12}><Undo c="#b0b0b0" flip /></Tool>
      <Tool $w={10} $ml={2}><Chev c="#bbb" s={6} /></Tool>
      <Tool $w={16} $ml={8}><Undo /></Tool>
      <Tool $w={10} $ml={2}><Chev s={7} /></Tool>
      <Tool $w={10} $ml={11}><Chev s={7} /></Tool>
      <VSep $h={26} $ml={11} />
      <DocTitle>Choose &amp; RandBetween Function-1 <Tri d="down" c="#333" s={5} /></DocTitle>
      <SearchBox><Lens s={15} />Search (Alt+Q)</SearchBox>
      <Tool $w={16} $ml={34}><Warn /></Tool>
      <Tool $w={64} $ml={8} $size={11}>Sanjiv Midha</Tool>
      <Avatar>SM</Avatar>
      <Tool $w={16} $ml={26}><Pen /></Tool>
      <Tool $w={10} $ml={29}><svg width="10" height="2"><path d="M0 1h10" stroke="#444" /></svg></Tool>
      <Tool $w={11} $ml={35}>
        <svg width="11" height="11" viewBox="0 0 11 11"><path d="M.5 2.5h8v8h-8zM2.5 2.5v-2h8v8h-2" fill="none" stroke="#444" /></svg>
      </Tool>
      <Tool $w={11} $ml={34}>
        <svg width="11" height="11" viewBox="0 0 11 11"><path d="M.5.5l10 10M10.5.5l-10 10" stroke="#444" /></svg>
      </Tool>
    </TitleBar>

    <TabRow>
      {TABS.map(([t, w, mr]) => <MenuTab key={t} $w={w} $mr={mr} $active={t === 'Home'}>{t}</MenuTab>)}
      <CommentsBtn><Comment />Comments</CommentsBtn>
      <ShareBtn><ShareIco />Share</ShareBtn>
    </TabRow>

    <Ribbon>
      <Group $w={56}>
        <GroupBody $pl={16}>
          <Stack $gap={8} $pt={2}>
            <ToolRow $h={16}><Undo /><Tool $w={12} $ml={2}><Chev s={7} /></Tool></ToolRow>
            <ToolRow $h={16}><Undo c="#b5b5b5" flip /><Tool $w={12} $ml={2}><Chev c="#bbb" s={7} /></Tool></ToolRow>
          </Stack>
        </GroupBody>
        <GroupLabel>Undo</GroupLabel>
      </Group>

      <Group $w={93}>
        <GroupBody $pl={13}>
          <BigButton $w={32} $pt={3}>
            <PasteIcon />
            <Line style={{ marginTop: 3 }}>Paste</Line>
            <Line style={{ marginTop: 3 }}><Chev s={7} /></Line>
          </BigButton>
          <Stack $gap={7} $pt={3} style={{ marginLeft: 8 }}>
            <ToolRow $h={16}><Tool $w={16}><CutIcon /></Tool></ToolRow>
            <ToolRow $h={16} style={{ marginTop: 3 }}><Tool $w={16}><CopyIcon /></Tool><Tool $w={14}><Chev s={7} /></Tool></ToolRow>
            <ToolRow $h={17}><Tool $w={16}><BrushIcon /></Tool></ToolRow>
          </Stack>
        </GroupBody>
        <GroupLabel $launcher>Clipboard<LauncherBox><Launcher /></LauncherBox></GroupLabel>
      </Group>

      <Group $w={222}>
        <GroupBody $pl={10}>
          <Stack $gap={9} $pt={8}>
            <ToolRow>
              <Combo $w={113}>Calibri<Chev s={7} /></Combo>
              <SizeCombo><SizeValue>11</SizeValue><SizeCaret><Chev c="#222" s={7} /></SizeCaret></SizeCombo>
              <Tool $w={20} $ml={5}><BoldA s={16} up /></Tool>
              <Tool $w={20} $ml={5}><BoldA s={13} /></Tool>
            </ToolRow>
            <ToolRow>
              <Tool $w={20} $bold $size={12}>B</Tool>
              <Tool $w={28} $size={12} style={{ fontStyle: 'italic', fontFamily: 'Liberation Serif' }}>I</Tool>
              <Tool $w={22} $size={12} style={{ textDecoration: 'underline' }}>U</Tool>
              <Tool $w={12}><Chev s={7} /></Tool>
              <VSep $h={21} $ml={4} />
              <Tool $w={18} $ml={3}><BorderGrid /></Tool>
              <Tool $w={18} $ml={63}><FontColor /></Tool>
              <Tool $w={16}><Chev s={7} /></Tool>
            </ToolRow>
          </Stack>
        </GroupBody>
        <GroupLabel $launcher>Font<LauncherBox><Launcher /></LauncherBox></GroupLabel>
      </Group>

      <Group $w={184}>
        <GroupBody $pl={7}>
          <AlignCol $gap={9} $pt={8}>
            <ToolRow>
              <Tool $w={24}><TextLines rows={alignTop} /></Tool>
              <Tool $w={26}><TextLines rows={alignMid} /></Tool>
              <BoxedTool $w={22}><TextLines rows={alignBot} /></BoxedTool>
              <Tool $w={25}><Orient /></Tool>
              <Tool $w={8}><Chev s={7} /></Tool>
            </ToolRow>
            <ToolRow>
              <Tool $w={24}><TextLines rows={alignL} /></Tool>
              <Tool $w={26}><TextLines rows={alignC} /></Tool>
              <Tool $w={22}><TextLines rows={alignR} /></Tool>
              <Tool $w={26}><Indent /></Tool>
              <Tool $w={24}><Indent flip /></Tool>
            </ToolRow>
          </AlignCol>
          <Stack $gap={9} $pt={8} style={{ paddingLeft: 10 }}>
            <ToolRow><Tool $w={16}><Wrap /></Tool></ToolRow>
            <ToolRow><Tool $w={16}><Merge /></Tool><Tool $w={18}><Chev s={7} /></Tool></ToolRow>
          </Stack>
        </GroupBody>
        <GroupLabel $launcher>Alignment<LauncherBox><Launcher /></LauncherBox></GroupLabel>
      </Group>

      <Group $w={152}>
        <GroupBody $pl={9}>
          <Stack $gap={9} $pt={8}>
            <ToolRow><Combo $w={136}>General<Chev s={7} /></Combo></ToolRow>
            <ToolRow>
              <Tool $w={22}><Accounting /></Tool>
              <Tool $w={12}><Chev s={7} /></Tool>
              <Tool $w={32} $size={17}>%</Tool>
              <Tool $w={16}><Comma /></Tool>
              <VSep $h={21} $ml={5} />
              <Tool $w={24}><DecimalIcon more /></Tool>
              <Tool $w={22}><DecimalIcon /></Tool>
            </ToolRow>
          </Stack>
        </GroupBody>
        <GroupLabel $launcher>Number<LauncherBox><Launcher /></LauncherBox></GroupLabel>
      </Group>

      <Group $w={186}>
        <GroupBody $pl={7}>
          <BigButton $w={72}>
            <BigIcon><CondFormat /></BigIcon>
            <Line>Conditional</Line>
            <Line>Formatting <Chev s={6} /></Line>
          </BigButton>
          <BigButton $w={56}>
            <BigIcon><TableBrush /></BigIcon>
            <Line>Format as</Line>
            <Line>Table <Chev s={6} /></Line>
          </BigButton>
          <BigButton $w={44}>
            <BigIcon><TableBrush wide /></BigIcon>
            <Line>Cell</Line>
            <Line>Styles <Chev s={6} /></Line>
          </BigButton>
        </GroupBody>
        <GroupLabel>Styles</GroupLabel>
      </Group>

      <Group $w={92}>
        <GroupBody $pl={11}>
          <Stack $gap={8} $pt={3}>
            <CellRow $w={65}><CellIcon kind="insert" />Insert<Chev s={7} /></CellRow>
            <CellRow $w={69}><CellIcon kind="delete" />Delete<Chev s={7} /></CellRow>
            <CellRow $w={65}><CellIcon kind="format" />Format<Chev s={7} /></CellRow>
          </Stack>
        </GroupBody>
        <GroupLabel>Cells</GroupLabel>
      </Group>

      <Group $w={139}>
        <GroupBody $pl={10}>
          <Stack $gap={8} $pt={4} $w={36}>
            <ToolRow $h={16}><Tool $w={16} $size={15}>Σ</Tool><Tool $w={20}><Chev s={7} /></Tool></ToolRow>
            <ToolRow $h={16}><FillDown /><Tool $w={20}><Chev s={7} /></Tool></ToolRow>
            <ToolRow $h={16}><Eraser /><Tool $w={20}><Chev s={7} /></Tool></ToolRow>
          </Stack>
          <BigButton $w={42}>
            <BigIcon><SortFilter /></BigIcon>
            <Line>Sort &amp;</Line>
            <Line>Filter <Chev s={6} /></Line>
          </BigButton>
          <BigButton $w={42}>
            <BigIcon><Lens s={30} w={0.55} /></BigIcon>
            <Line>Find &amp;</Line>
            <Line>Select <Chev s={6} /></Line>
          </BigButton>
        </GroupBody>
        <GroupLabel>Editing</GroupLabel>
      </Group>

      <Group $w={58}>
        <GroupBody>
          <BigButton $w={58} $pt={3}>
            <BigIcon><AnalyzeIcon /></BigIcon>
            <Line style={{ marginTop: 1 }}>Analyze</Line>
            <Line>Data</Line>
          </BigButton>
        </GroupBody>
        <GroupLabel>Analysis</GroupLabel>
      </Group>

      <RibbonEnd><Chev s={10} /></RibbonEnd>
    </Ribbon>

    <FormulaBar>
      <NameBox>H4<Chev s={10} /></NameBox>
      <Tool $w={6} $ml={7} $color="#666" $size={13}>⋮</Tool>
      <FxBox>
        <svg width="13" height="13" viewBox="0 0 13 13"><path d="M1 1l11 11M12 1L1 12" stroke="#c4c4c4" /></svg>
        <svg width="15" height="12" viewBox="0 0 15 12" style={{ marginLeft: 8 }}><path d="M1 6l4 4 9-9" fill="none" stroke="#c4c4c4" /></svg>
        <FxText>fx</FxText>
      </FxBox>
      <FormulaInput>
        <span>=RANDBETWEEN(1,10)</span>
        <Chev s={10} />
      </FormulaInput>
    </FormulaBar>

    <SheetArea>
      <GridClip><Sheet /></GridClip>
      <VScroll>
        <Tri d="up" />
        <VThumb />
        <VSpacer />
        <Tri d="down" />
        <VSpacer $h={6} />
      </VScroll>
    </SheetArea>

    <TabStrip>
      <NavArrows><Tri d="left" c="#c4c4c4" s={6} /><Tri d="right" c="#c4c4c4" s={6} /></NavArrows>
      <SheetTab $w={50} $sep>Start</SheetTab>
      <SheetTab $w={29} $sep>1</SheetTab>
      <SheetTab $w={29} $sep>2</SheetTab>
      <SheetTab $w={61}>Sheet1</SheetTab>
      <SheetTab $w={60} $active>Sheet2</SheetTab>
      <Tool $w={18} $ml={30}>
        <svg width="15" height="15" viewBox="0 0 15 15"><circle cx="7.5" cy="7.5" r="6.8" fill="none" stroke="#666" /><path d="M7.5 4v7M4 7.5h7" stroke="#666" /></svg>
      </Tool>
      <Tool $w={6} $ml={396} $size={10} $color="#aaa">⋮</Tool>
      <Tool $w={8} $ml={13}><Tri d="left" c="#666" /></Tool>
      <HThumb />
      <Tool $w={8} $ml={33}><Tri d="right" c="#666" /></Tool>
    </TabStrip>

    <StatusBar>
      <Tool $w={30} style={{ justifyContent: 'flex-start' }}>Ready</Tool>
      <Tool $w={16} $ml={16}><Macro /></Tool>
      <Tool $w={16} $ml={14}><Access /></Tool>
      <Tool $w={118} $ml={2} style={{ justifyContent: 'flex-start' }}>Accessibility: Investigate</Tool>
      <ViewBtn $w={37} $active $auto><ViewIco kind="normal" /></ViewBtn>
      <ViewBtn $w={38}><ViewIco kind="layout" /></ViewBtn>
      <ViewBtn $w={36}><ViewIco kind="break" /></ViewBtn>
      <Tool $w={10} $ml={5}>–</Tool>
      <ZoomTrack><ZoomThumb /></ZoomTrack>
      <Tool $w={10} $ml={4}>+</Tool>
      <Tool $w={36} $ml={5}>100%</Tool>
      <Tool $w={2} />
    </StatusBar>

    <TaskBar>
      <Tool $w={45}><WinLogo /></Tool>
      <TaskSearch><Lens s={17} c="#222" />Type here to search</TaskSearch>
      <TaskIcon $w={46}><svg width="16" height="16" viewBox="0 0 16 16"><circle cx="8" cy="8" r="6.5" fill="none" stroke="#fff" strokeWidth="2" /></svg></TaskIcon>
      <TaskIcon $w={47}><TaskView /></TaskIcon>
      <TaskIcon><SnipBird /></TaskIcon>
      <TaskIcon><Folder /></TaskIcon>
      <TaskIcon><Vlc /></TaskIcon>
      <TaskIcon><Firefox /></TaskIcon>
      <TaskIcon><ClockSnip /></TaskIcon>
      <TaskIcon><Chrome /></TaskIcon>
      <TaskIcon $running><Camtasia bg="#4caf1f" fg="#d8f5b0" /></TaskIcon>
      <TaskIcon $running $active><ExcelLogo s={21} /></TaskIcon>
      <TaskIcon $running><Camtasia bg="#e9553f" fg="#fbe0da" /></TaskIcon>
      <TrayText $w={40} $ml={13}>Desktop</TrayText>
      <Tool $w={22} $size={13} style={{ alignSelf: 'flex-start', marginTop: 4 }}>»</Tool>
      <Tool $w={30} $ml={16}><Weather /></Tool>
      <TrayText $w={30} $ml={4} $size={13}>12°C</TrayText>
      <Tool $w={20} $ml={8}><svg width="11" height="7" viewBox="0 0 11 7"><path d="M.5 6l5-5 5 5" fill="none" stroke="#fff" /></svg></Tool>
      <Tool $w={20} $ml={3}><Speaker /></Tool>
      <Tool $w={20} $ml={2}><MeetIcon /></Tool>
      <Tool $w={20} $ml={3}><Battery /></Tool>
      <Tool $w={20} $ml={3}><Wifi /></Tool>
      <TrayText $w={24} $ml={5} $size={11}>ENG</TrayText>
      <TrayText $w={60} $ml={7} $size={11.5} $center>02:19<br />11-02-2022</TrayText>
      <Tool $w={20} $ml={13}><Notify /></Tool>
    </TaskBar>

    <SizeMenu>
      {SIZES.map(s => <SizeItem key={s} $hover={s === 18}>{s}</SizeItem>)}
      <MoreDots>····</MoreDots>
    </SizeMenu>
    <CursorWrap><Cursor /></CursorWrap>
    <SheetHandle>
      <svg width="14" height="10" viewBox="0 0 14 10"><path d="M6 0v10L1 5zM13 0v10L8 5z" fill="#444" /></svg>
      <DotGrid>{Array.from({ length: 12 }, (_, i) => <i key={i} />)}</DotGrid>
    </SheetHandle>
  </Page>
);

export default App;
